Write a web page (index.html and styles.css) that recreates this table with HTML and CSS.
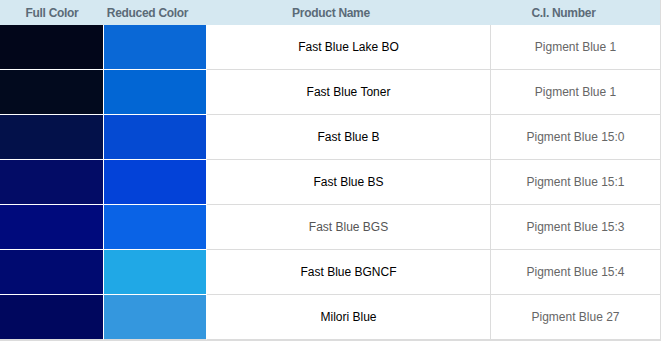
FILE: index.html
```html
<!DOCTYPE html>
<html>
<head>
<meta charset="utf-8">
<link rel="stylesheet" href="styles.css">
</head>
<body>
<table class="pigments">
  <colgroup>
    <col class="w-full">
    <col class="w-reduced">
    <col class="w-name">
    <col class="w-ci">
  </colgroup>
  <thead>
    <tr>
      <th class="h-full">Full Color</th>
      <th class="h-reduced">Reduced Color</th>
      <th class="h-name">Product Name</th>
      <th class="h-ci">C.I. Number</th>
    </tr>
  </thead>
  <tbody>
    <tr>
      <td class="swatch" style="background:#02061a"></td>
      <td class="swatch" style="background:#0a68d6"></td>
      <td class="name">Fast Blue Lake BO</td>
      <td class="ci">Pigment Blue 1</td>
    </tr>
    <tr>
      <td class="swatch" style="background:#020a1e"></td>
      <td class="swatch" style="background:#0266d4"></td>
      <td class="name">Fast Blue Toner</td>
      <td class="ci">Pigment Blue 1</td>
    </tr>
    <tr>
      <td class="swatch" style="background:#03114a"></td>
      <td class="swatch" style="background:#054ad2"></td>
      <td class="name">Fast Blue B</td>
      <td class="ci">Pigment Blue 15:0</td>
    </tr>
    <tr>
      <td class="swatch" style="background:#030c66"></td>
      <td class="swatch" style="background:#0342d8"></td>
      <td class="name">Fast Blue BS</td>
      <td class="ci">Pigment Blue 15:1</td>
    </tr>
    <tr>
      <td class="swatch" style="background:#000a7c"></td>
      <td class="swatch" style="background:#0a63e6"></td>
      <td class="name muted">Fast Blue BGS</td>
      <td class="ci">Pigment Blue 15:3</td>
    </tr>
    <tr>
      <td class="swatch" style="background:#000a70"></td>
      <td class="swatch" style="background:#20a8e6"></td>
      <td class="name">Fast Blue BGNCF</td>
      <td class="ci">Pigment Blue 15:4</td>
    </tr>
    <tr>
      <td class="swatch" style="background:#00075e"></td>
      <td class="swatch" style="background:#3497de"></td>
      <td class="name">Milori Blue</td>
      <td class="ci">Pigment Blue 27</td>
    </tr>
  </tbody>
</table>
</body>
</html>
```
FILE: styles.css
```css
html, body {
  margin: 0;
  padding: 0;
  background: #ffffff;
}
body {
  font-family: "Liberation Sans", Arial, sans-serif;
}
.pigments {
  width: 661px;
  border-collapse: separate;
  border-spacing: 0;
  table-layout: fixed;
  border-right: 1px solid #dcdcdc;
  border-bottom: 1px solid #dcdcdc;
}
.w-full { width: 104px; }
.w-reduced { width: 103px; }
.w-name { width: 284px; }
.pigments th {
  height: 25px;
  padding: 0;
  background: #d5e8f1;
  color: #5b6b78;
  font-size: 12px;
  font-weight: bold;
  letter-spacing: -0.3px;
  text-align: center;
  vertical-align: middle;
}
.pigments th.h-reduced { padding-right: 16px; }
.pigments th.h-name { padding-right: 36px; }
.pigments th.h-ci { padding-right: 24px; }
.pigments td {
  height: 44px;
  padding: 0;
  font-size: 12px;
  text-align: center;
  vertical-align: middle;
  border-bottom: 1px solid #dcdcdc;
}
.pigments td.swatch {
  border-bottom: 1px solid #ffffff;
  border-right: 1px solid #ffffff;
}
.pigments tbody tr:last-child td.swatch {
  border-bottom-color: #dcdcdc;
}
.name {
  color: #000000;
  border-right: 1px solid #dcdcdc;
}
.name.muted {
  color: #555555;
}
.ci {
  color: #666666;
}
```
